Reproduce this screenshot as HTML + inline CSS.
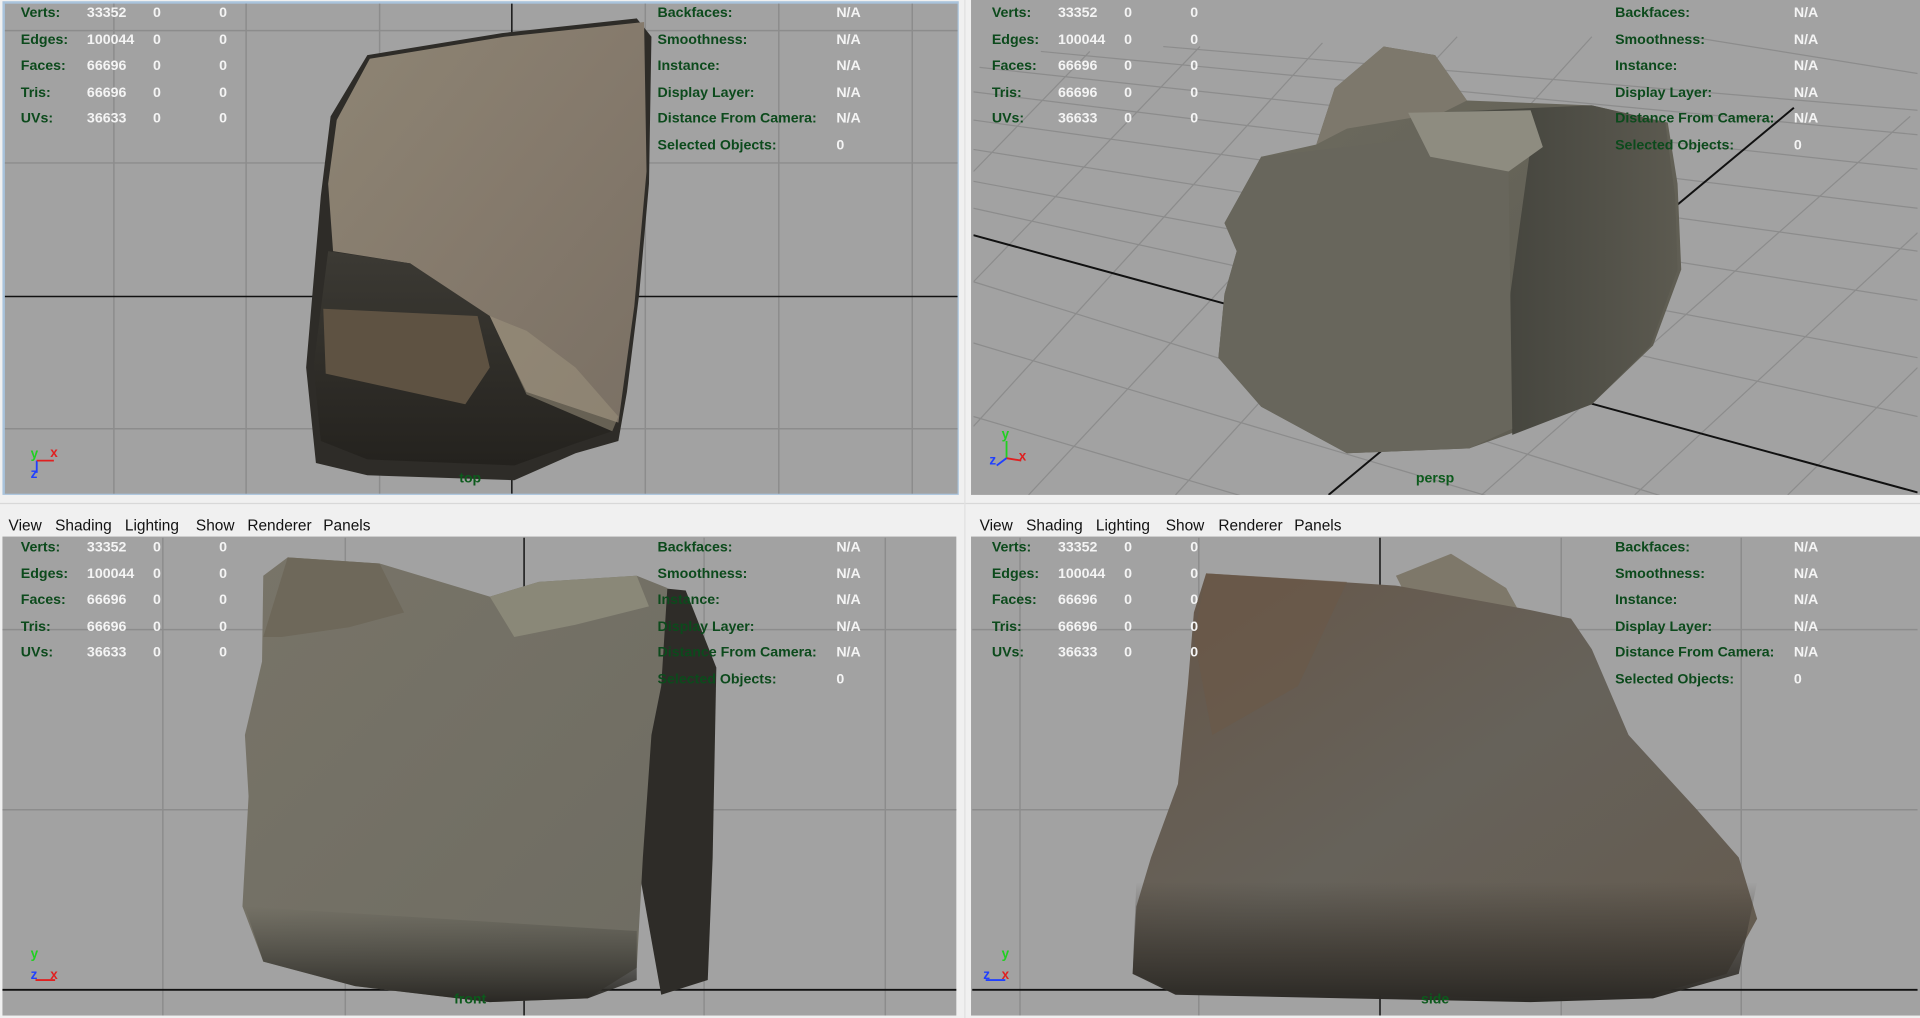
<!DOCTYPE html>
<html><head><meta charset="utf-8">
<style>
html,body{margin:0;padding:0;background:#f0f0f0;overflow:hidden}
svg{display:block}
.l{font:bold 11.6px "Liberation Sans",sans-serif;fill:#0c4a1c}
.v{font:bold 11.6px "Liberation Sans",sans-serif;fill:#f4f4f4}
.m{font:12.6px "Liberation Sans",sans-serif;fill:#111}
.c{font:bold 11.5px "Liberation Sans",sans-serif;fill:#0c5a1c}
.ax{font:bold 11px "Liberation Sans",sans-serif}
</style></head><body>
<svg width="1920" height="1018" viewBox="0 0 1568 831" preserveAspectRatio="none" xmlns="http://www.w3.org/2000/svg">
<defs>
<linearGradient id="g1" x1="0" y1="0" x2="1" y2="1"><stop offset="0" stop-color="#8e8574"/><stop offset=".5" stop-color="#857a6c"/><stop offset="1" stop-color="#7a7064"/></linearGradient>
<linearGradient id="g1d" x1="0" y1="0" x2="0" y2="1"><stop offset="0" stop-color="#3c3a34"/><stop offset="1" stop-color="#24221e"/></linearGradient>
<linearGradient id="g2" x1="0" y1="0" x2="1" y2="1"><stop offset="0" stop-color="#6e6c60"/><stop offset="1" stop-color="#5c5a50"/></linearGradient>
<linearGradient id="g2s" x1="0" y1="0" x2="1" y2="0"><stop offset="0" stop-color="#7a7a6e"/><stop offset=".3" stop-color="#45453e"/><stop offset="1" stop-color="#5c5a50"/></linearGradient>
<linearGradient id="g3" x1="0" y1="0" x2="1" y2="1"><stop offset="0" stop-color="#787468"/><stop offset="1" stop-color="#6e6c62"/></linearGradient>
<linearGradient id="g3b" x1="0" y1="0" x2="0" y2="1"><stop offset="0" stop-color="#3a3a34" stop-opacity="0"/><stop offset="1" stop-color="#2a2824"/></linearGradient>
<linearGradient id="g4" x1="0" y1="0" x2="1" y2="1"><stop offset="0" stop-color="#665648"/><stop offset=".5" stop-color="#66625a"/><stop offset="1" stop-color="#645a4e"/></linearGradient>
<linearGradient id="g4b" x1="0" y1="0" x2="0" y2="1"><stop offset="0" stop-color="#3a3630" stop-opacity="0"/><stop offset=".6" stop-color="#3a3630" stop-opacity=".8"/><stop offset="1" stop-color="#2a2824"/></linearGradient>
<clipPath id="cTL"><rect x="4" y="3" width="778" height="400"/></clipPath>
<clipPath id="cTR"><rect x="795" y="2" width="771" height="402"/></clipPath>
<clipPath id="cBL"><rect x="2" y="439" width="779" height="390"/></clipPath>
<clipPath id="cBR"><rect x="794" y="439" width="772" height="390"/></clipPath>
</defs>

<rect width="1568" height="831" fill="#f0f0f0"/>
<line x1="0" y1="411" x2="1568" y2="411" stroke="#d8d8d8"/>
<line x1="788" y1="0" x2="788" y2="831" stroke="#e0e0e0"/>

<!-- TL -->
<rect x="2" y="1" width="781" height="403" fill="#a9c3dc"/>
<rect x="4" y="3" width="778" height="400" fill="#a2a2a2"/>
<g clip-path="url(#cTL)" stroke="#8c8c8c" stroke-width="1.2">
<line x1="93" y1="0" x2="93" y2="404"/><line x1="201" y1="0" x2="201" y2="404"/><line x1="310" y1="0" x2="310" y2="404"/><line x1="527" y1="0" x2="527" y2="404"/><line x1="636" y1="0" x2="636" y2="404"/><line x1="745" y1="0" x2="745" y2="404"/>
<line x1="0" y1="25" x2="783" y2="25"/><line x1="0" y1="133" x2="783" y2="133"/><line x1="0" y1="350" x2="783" y2="350"/>
<line x1="418" y1="0" x2="418" y2="404" stroke="#111"/><line x1="0" y1="242" x2="783" y2="242" stroke="#111"/>
</g>
<g clip-path="url(#cTL)">
<polygon points="270,95 300,45 410,27 520,15 532,30 530,150 522,240 512,320 505,360 470,370 420,392 300,388 258,378 250,300 256,230 262,160" fill="#2e2c28"/>
<polygon points="275,98 302,48 412,30 526,18 528,140 518,250 505,345 430,320 400,260 335,215 272,205 268,150" fill="url(#g1)"/>
<polygon points="268,205 335,215 400,258 430,322 500,352 470,362 420,380 300,375 262,360 256,300" fill="url(#g1d)"/>
<polygon points="264,252 390,258 400,300 380,330 266,305" fill="#5e5242"/>
<polygon points="400,258 430,322 500,352 505,340 470,300 430,270" fill="#a09680" opacity=".5"/>
</g>

<!-- TR -->
<rect x="793" y="0" width="775" height="404" fill="#a2a2a2"/>
<g clip-path="url(#cTR)" stroke="#8c8c8c" stroke-width="1">
<line x1="795" y1="75" x2="1566" y2="170"/><line x1="795" y1="98" x2="1566" y2="205"/><line x1="795" y1="122" x2="1566" y2="245"/><line x1="795" y1="148" x2="1566" y2="292"/><line x1="795" y1="170" x2="1566" y2="340"/><line x1="795" y1="230" x2="1566" y2="470"/><line x1="795" y1="280" x2="1400" y2="460"/><line x1="795" y1="340" x2="1200" y2="460"/>
<line x1="800" y1="55" x2="1566" y2="138"/><line x1="850" y1="42" x2="1566" y2="110"/><line x1="950" y1="38" x2="1566" y2="90"/>
<line x1="960" y1="404" x2="1300" y2="30"/><line x1="840" y1="404" x2="1190" y2="30"/><line x1="795" y1="348" x2="1080" y2="35"/><line x1="795" y1="230" x2="980" y2="38"/><line x1="795" y1="140" x2="890" y2="42"/>
<line x1="1210" y1="404" x2="1560" y2="95"/><line x1="1335" y1="404" x2="1566" y2="190"/><line x1="1460" y1="404" x2="1566" y2="300"/><line x1="1380" y1="30" x2="1566" y2="60"/>
<line x1="1085" y1="404" x2="1465" y2="88" stroke="#111" stroke-width="1.6"/>
<line x1="795" y1="192" x2="1566" y2="402" stroke="#111" stroke-width="1.6"/>
</g>
<g clip-path="url(#cTR)">
<polygon points="1000,182 1030,128 1075,118 1090,72 1130,38 1172,45 1198,82 1300,86 1362,100 1370,150 1373,220 1350,282 1300,330 1200,366 1100,370 1030,332 995,292 1000,240 1010,205" fill="url(#g2)"/>
<polygon points="1075,118 1090,72 1130,38 1172,45 1198,82 1178,92 1100,105" fill="#7d786c"/>
<polygon points="1165,92 1300,86 1360,100 1368,160 1370,220 1348,282 1300,330 1235,355 1232,250 1250,120" fill="url(#g2s)"/>
<polygon points="1030,128 1170,112 1232,140 1235,350 1200,366 1100,370 1030,332 995,292 1000,240 1010,205 1000,182" fill="#68665c"/>
<polygon points="1150,92 1250,90 1260,120 1232,140 1168,128" fill="#8e8c80"/>
</g>

<!-- menus -->
<rect x="0" y="418" width="783" height="20" fill="#f0f0f0"/>
<rect x="793" y="418" width="775" height="20" fill="#f0f0f0"/>
<g class="m">
<text class="m" x="7" y="433">View</text><text class="m" x="45" y="433">Shading</text><text class="m" x="102" y="433">Lighting</text><text class="m" x="160" y="433">Show</text><text class="m" x="202" y="433">Renderer</text><text class="m" x="264" y="433">Panels</text>
<text class="m" x="800" y="433">View</text><text class="m" x="838" y="433">Shading</text><text class="m" x="895" y="433">Lighting</text><text class="m" x="952" y="433">Show</text><text class="m" x="995" y="433">Renderer</text><text class="m" x="1057" y="433">Panels</text>
</g>

<!-- BL -->
<rect x="2" y="438" width="779" height="391" fill="#a2a2a2"/>
<g clip-path="url(#cBL)" stroke="#8c8c8c" stroke-width="1.2">
<line x1="133" y1="438" x2="133" y2="831"/><line x1="282" y1="438" x2="282" y2="831"/><line x1="575" y1="438" x2="575" y2="831"/><line x1="723" y1="438" x2="723" y2="831"/>
<line x1="0" y1="514" x2="783" y2="514"/><line x1="0" y1="661" x2="783" y2="661"/>
<line x1="428" y1="438" x2="428" y2="831" stroke="#111"/><line x1="0" y1="808" x2="783" y2="808" stroke="#111" stroke-width="1.6"/>
</g>
<g clip-path="url(#cBL)">
<polygon points="520,478 560,482 585,545 582,700 578,800 540,812 520,700" fill="#2e2c28"/>
<polygon points="215,470 235,455 310,460 400,487 440,475 520,470 545,480 540,560 532,600 525,700 520,790 480,815 400,818 290,805 215,785 198,740 203,650 200,600 214,540" fill="url(#g3)"/>
<polygon points="200,740 520,760 520,800 480,815 400,818 290,805 215,785" fill="url(#g3b)"/>
<polygon points="235,455 310,460 330,500 285,512 230,520 215,520" fill="#6e685a"/>
<polygon points="400,487 440,475 520,470 530,495 470,510 420,520" fill="#8a8878"/>
</g>

<!-- BR -->
<rect x="793" y="438" width="775" height="391" fill="#a2a2a2"/>
<g clip-path="url(#cBR)" stroke="#8c8c8c" stroke-width="1.2">
<line x1="833" y1="438" x2="833" y2="831"/><line x1="979" y1="438" x2="979" y2="831"/><line x1="1275" y1="438" x2="1275" y2="831"/><line x1="1422" y1="438" x2="1422" y2="831"/>
<line x1="793" y1="514" x2="1568" y2="514"/><line x1="793" y1="661" x2="1568" y2="661"/>
<line x1="1127" y1="438" x2="1127" y2="831" stroke="#111"/><line x1="793" y1="808" x2="1568" y2="808" stroke="#111" stroke-width="1.6"/>
</g>
<g clip-path="url(#cBR)">
<polygon points="1140,470 1185,452 1230,480 1240,498 1150,490" fill="#7e786a"/>
<polygon points="985,468 1140,478 1250,498 1283,505 1300,530 1330,600 1385,660 1420,700 1435,750 1410,795 1350,812 1250,815 1100,812 960,810 925,795 928,740 940,700 962,640 970,560 975,500" fill="url(#g4)"/>
<polygon points="928,720 1435,720 1420,795 1350,815 1250,818 1100,815 960,812 925,795" fill="url(#g4b)"/>
<polygon points="985,468 1100,475 1060,560 990,600 975,520" fill="#6a5848" opacity=".6"/>
</g>

<!-- Stats -->
<g id="sl">
<text class="l" x="17" y="14">Verts:</text><text class="v" x="71" y="14">33352</text><text class="v" x="125" y="14">0</text><text class="v" x="179" y="14">0</text>
<text class="l" x="17" y="36">Edges:</text><text class="v" x="71" y="36">100044</text><text class="v" x="125" y="36">0</text><text class="v" x="179" y="36">0</text>
<text class="l" x="17" y="57">Faces:</text><text class="v" x="71" y="57">66696</text><text class="v" x="125" y="57">0</text><text class="v" x="179" y="57">0</text>
<text class="l" x="17" y="79">Tris:</text><text class="v" x="71" y="79">66696</text><text class="v" x="125" y="79">0</text><text class="v" x="179" y="79">0</text>
<text class="l" x="17" y="100">UVs:</text><text class="v" x="71" y="100">36633</text><text class="v" x="125" y="100">0</text><text class="v" x="179" y="100">0</text>
</g>
<g id="sr">
<text class="l" x="537" y="14">Backfaces:</text><text class="v" x="683" y="14">N/A</text>
<text class="l" x="537" y="36">Smoothness:</text><text class="v" x="683" y="36">N/A</text>
<text class="l" x="537" y="57">Instance:</text><text class="v" x="683" y="57">N/A</text>
<text class="l" x="537" y="79">Display Layer:</text><text class="v" x="683" y="79">N/A</text>
<text class="l" x="537" y="100">Distance From Camera:</text><text class="v" x="683" y="100">N/A</text>
<text class="l" x="537" y="122">Selected Objects:</text><text class="v" x="683" y="122">0</text>
</g>
<use href="#sl" x="793" y="0"/>
<use href="#sl" x="0" y="436"/>
<use href="#sl" x="793" y="436"/>
<use href="#sr" x="782" y="0"/>
<use href="#sr" x="0" y="436"/>
<use href="#sr" x="782" y="436"/>

<!-- camera names -->
<text class="c" x="384" y="394" text-anchor="middle">top</text>
<text class="c" x="1172" y="394" text-anchor="middle">persp</text>
<text class="c" x="384" y="819" text-anchor="middle">front</text>
<text class="c" x="1172" y="819" text-anchor="middle">side</text>

<!-- axes -->
<g class="ax">
<line x1="30" y1="376" x2="30" y2="386" stroke="#2040ff" stroke-width="1.5"/><line x1="30" y1="376" x2="44" y2="376" stroke="#e02020" stroke-width="1.5"/>
<text x="25" y="374" fill="#20d020">y</text><text x="41" y="373" fill="#e02020">x</text><text x="25" y="390" fill="#2040ff">z</text>

<line x1="822" y1="360" x2="822" y2="374" stroke="#20d020" stroke-width="1.5"/><line x1="822" y1="374" x2="834" y2="376" stroke="#e02020" stroke-width="1.5"/><line x1="822" y1="374" x2="814" y2="380" stroke="#2040ff" stroke-width="1.5"/>
<text x="818" y="358" fill="#20d020">y</text><text x="832" y="376" fill="#e02020">x</text><text x="808" y="379" fill="#2040ff">z</text>

<line x1="29" y1="800" x2="45" y2="800" stroke="#e02020" stroke-width="1.5"/>
<text x="25" y="782" fill="#20d020">y</text><text x="25" y="799" fill="#2040ff">z</text><text x="41" y="799" fill="#e02020">x</text>

<line x1="805" y1="800" x2="821" y2="800" stroke="#2040ff" stroke-width="1.5"/>
<text x="818" y="782" fill="#20d020">y</text><text x="803" y="799" fill="#2040ff">z</text><text x="818" y="799" fill="#e02020">x</text>
</g>
</svg>
</body></html>
